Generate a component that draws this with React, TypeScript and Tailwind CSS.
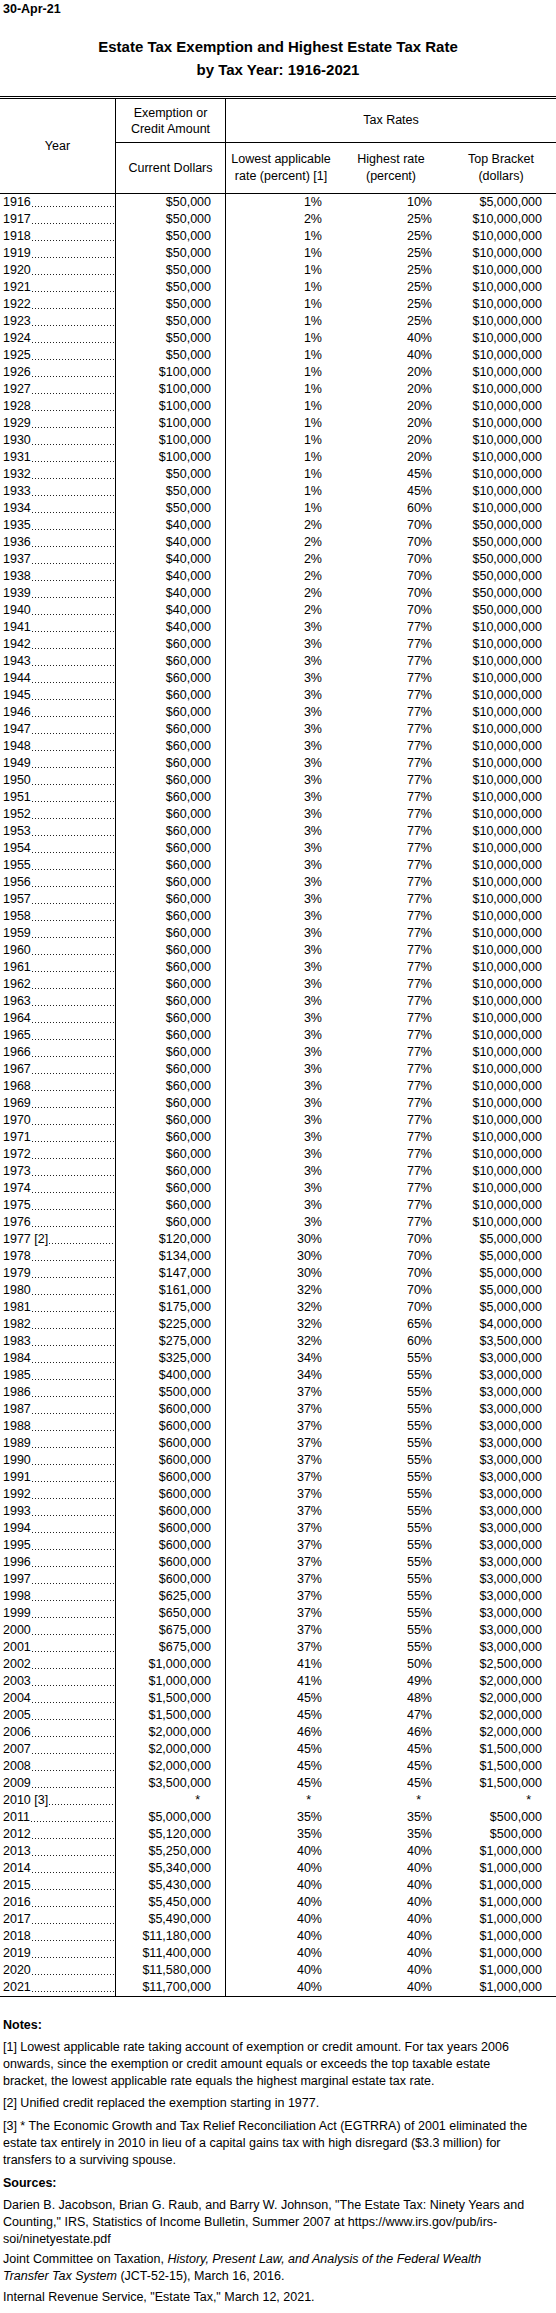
import React from "react";

type Row = [string, string, string, string, string];

function buildRows(): Row[] {
  const rows: Row[] = [];
  const add = (y: string, ex: string, lo: string, hi: string, top: string) =>
    rows.push([y, ex, lo, hi, top]);

  add("1916", "$50,000", "1%", "10%", "$5,000,000");
  add("1917", "$50,000", "2%", "25%", "$10,000,000");
  for (let y = 1918; y <= 1923; y++) add(String(y), "$50,000", "1%", "25%", "$10,000,000");
  add("1924", "$50,000", "1%", "40%", "$10,000,000");
  add("1925", "$50,000", "1%", "40%", "$10,000,000");
  for (let y = 1926; y <= 1931; y++) add(String(y), "$100,000", "1%", "20%", "$10,000,000");
  add("1932", "$50,000", "1%", "45%", "$10,000,000");
  add("1933", "$50,000", "1%", "45%", "$10,000,000");
  add("1934", "$50,000", "1%", "60%", "$10,000,000");
  for (let y = 1935; y <= 1940; y++) add(String(y), "$40,000", "2%", "70%", "$50,000,000");
  add("1941", "$40,000", "3%", "77%", "$10,000,000");
  for (let y = 1942; y <= 1976; y++) add(String(y), "$60,000", "3%", "77%", "$10,000,000");
  add("1977 [2]", "$120,000", "30%", "70%", "$5,000,000");
  add("1978", "$134,000", "30%", "70%", "$5,000,000");
  add("1979", "$147,000", "30%", "70%", "$5,000,000");
  add("1980", "$161,000", "32%", "70%", "$5,000,000");
  add("1981", "$175,000", "32%", "70%", "$5,000,000");
  add("1982", "$225,000", "32%", "65%", "$4,000,000");
  add("1983", "$275,000", "32%", "60%", "$3,500,000");
  add("1984", "$325,000", "34%", "55%", "$3,000,000");
  add("1985", "$400,000", "34%", "55%", "$3,000,000");
  add("1986", "$500,000", "37%", "55%", "$3,000,000");
  for (let y = 1987; y <= 1997; y++) add(String(y), "$600,000", "37%", "55%", "$3,000,000");
  add("1998", "$625,000", "37%", "55%", "$3,000,000");
  add("1999", "$650,000", "37%", "55%", "$3,000,000");
  add("2000", "$675,000", "37%", "55%", "$3,000,000");
  add("2001", "$675,000", "37%", "55%", "$3,000,000");
  add("2002", "$1,000,000", "41%", "50%", "$2,500,000");
  add("2003", "$1,000,000", "41%", "49%", "$2,000,000");
  add("2004", "$1,500,000", "45%", "48%", "$2,000,000");
  add("2005", "$1,500,000", "45%", "47%", "$2,000,000");
  add("2006", "$2,000,000", "46%", "46%", "$2,000,000");
  add("2007", "$2,000,000", "45%", "45%", "$1,500,000");
  add("2008", "$2,000,000", "45%", "45%", "$1,500,000");
  add("2009", "$3,500,000", "45%", "45%", "$1,500,000");
  add("2010 [3]", "*", "*", "*", "*");
  add("2011", "$5,000,000", "35%", "35%", "$500,000");
  add("2012", "$5,120,000", "35%", "35%", "$500,000");
  add("2013", "$5,250,000", "40%", "40%", "$1,000,000");
  add("2014", "$5,340,000", "40%", "40%", "$1,000,000");
  add("2015", "$5,430,000", "40%", "40%", "$1,000,000");
  add("2016", "$5,450,000", "40%", "40%", "$1,000,000");
  add("2017", "$5,490,000", "40%", "40%", "$1,000,000");
  add("2018", "$11,180,000", "40%", "40%", "$1,000,000");
  add("2019", "$11,400,000", "40%", "40%", "$1,000,000");
  add("2020", "$11,580,000", "40%", "40%", "$1,000,000");
  add("2021", "$11,700,000", "40%", "40%", "$1,000,000");
  return rows;
}

const rows = buildRows();

function Num({ v, border }: { v: string; border?: boolean }) {
  return (
    <div className={`text-right pr-[14px] whitespace-nowrap ${border ? "border-r border-black" : ""}`}>
      {v === "*" ? <span className="mr-[11px]">*</span> : v}
    </div>
  );
}

export default function App() {
  return (
    <div className="w-[556px] bg-white text-black font-['Liberation_Sans',Arial,sans-serif] text-[12.5px]">
      <div className="h-[19px] leading-[19px] pl-[3px] font-bold">30-Apr-21</div>

      <div className="mt-[16px] text-center font-bold text-[15px] leading-[23px]">
        <div>Estate Tax Exemption and Highest Estate Tax Rate</div>
        <div>by Tax Year: 1916-2021</div>
      </div>

      <div className="mt-[15px] border-t-[3px] border-double border-black">
        {/* header */}
        <div className="grid grid-cols-[116px_110px_330px] border-b border-black">
          <div className="row-span-2 border-r border-black flex items-center justify-center">Year</div>
          <div className="h-[44px] border-r border-b border-black flex flex-col items-center justify-center leading-[16px]">
            <span>Exemption or</span>
            <span>Credit Amount</span>
          </div>
          <div className="h-[44px] border-b border-black flex items-center justify-center">Tax Rates</div>
          <div className="h-[50px] border-r border-black flex items-center justify-center">Current Dollars</div>
          <div className="h-[50px] grid grid-cols-3 leading-[17px] text-center">
            <div className="flex flex-col items-center justify-center">
              <span>Lowest applicable</span>
              <span>rate (percent) [1]</span>
            </div>
            <div className="flex flex-col items-center justify-center">
              <span>Highest rate</span>
              <span>(percent)</span>
            </div>
            <div className="flex flex-col items-center justify-center">
              <span>Top Bracket</span>
              <span>(dollars)</span>
            </div>
          </div>
        </div>

        {/* body */}
        <div className="border-b border-black">
          {rows.map((r) => (
            <div key={r[0]} className="grid grid-cols-[116px_110px_110px_110px_110px] h-[17px] leading-[17px]">
              <div className="flex min-w-0 border-r border-black pl-[3px] pr-[1px]">
                <span className="whitespace-nowrap">{r[0]}</span>
                <span className="flex-1 ml-[1px] bg-[linear-gradient(to_right,#222_1px,transparent_1px)] bg-[length:3px_1px] bg-[position:0_12px] bg-repeat-x" />
              </div>
              <Num v={r[1]} border />
              <Num v={r[2]} />
              <Num v={r[3]} />
              <Num v={r[4]} />
            </div>
          ))}
        </div>
      </div>

      {/* notes */}
      <div className="mt-[20px] px-[3px] leading-[17px] pb-[4px]">
        <div className="font-bold">Notes:</div>
        <div className="mt-[5px]">
          <div>[1] Lowest applicable rate taking account of exemption or credit amount. For tax years 2006</div>
          <div>onwards, since the exemption or credit amount equals or exceeds the top taxable estate</div>
          <div>bracket, the lowest applicable rate equals the highest marginal estate tax rate.</div>
        </div>
        <div className="mt-[5px]">[2] Unified credit replaced the exemption starting in 1977.</div>
        <div className="mt-[6px]">
          <div>[3] * The Economic Growth and Tax Relief Reconciliation Act (EGTRRA) of 2001 eliminated the</div>
          <div>estate tax entirely in 2010 in lieu of a capital gains tax with high disregard ($3.3 million) for</div>
          <div>transfers to a surviving spouse.</div>
        </div>
        <div className="mt-[6px] font-bold">Sources:</div>
        <div className="mt-[5px]">
          <div>Darien B. Jacobson, Brian G. Raub, and Barry W. Johnson, "The Estate Tax: Ninety Years and</div>
          <div>Counting," IRS, Statistics of Income Bulletin, Summer 2007 at https://www.irs.gov/pub/irs-</div>
          <div>soi/ninetyestate.pdf</div>
        </div>
        <div className="mt-[3px]">
          <div>
            Joint Committee on Taxation, <i>History, Present Law, and Analysis of the Federal Wealth</i>
          </div>
          <div>
            <i>Transfer Tax System</i> (JCT-52-15), March 16, 2016.
          </div>
        </div>
        <div className="mt-[4px]">Internal Revenue Service, "Estate Tax," March 12, 2021.</div>
      </div>
    </div>
  );
}
